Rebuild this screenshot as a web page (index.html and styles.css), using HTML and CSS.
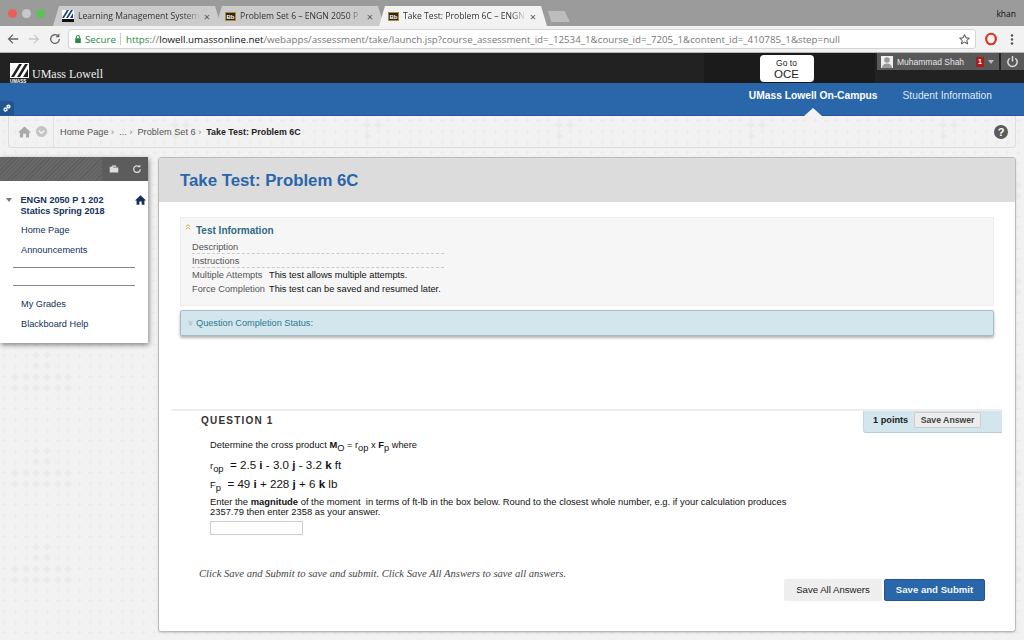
FILE: index.html
```html
<!DOCTYPE html>
<html lang="en">
  <head>
    <meta charset="UTF-8">
    <meta name="viewport" content="width=device-width, initial-scale=1.0">
    <title>Take Test: Problem 6C</title>
    <link rel="stylesheet" href="styles.css">
  </head>
  <body>
    <!-- browser chrome -->
    <div class="tabstrip">
      <div class="traffic">
        <span class="dot dot-red"></span>
        <span class="dot dot-grey"></span>
        <span class="dot dot-green"></span>
      </div>
      <div class="tab">
        <svg class="favicon" viewBox="0 0 12 12"><rect width="12" height="9" fill="#fff"/><path d="M0 8 5 0h2L2 8zM4 8l5-8h2L6 8zM8 8l3-5v5z" fill="#1c3f78"/><rect y="9" width="12" height="3" fill="#111"/></svg>
        <span class="tab-title">Learning Management System</span><span class="tab-x">×</span>
      </div>
      <div class="tab">
        <span class="favicon-sq">Bb</span>
        <span class="tab-title">Problem Set 6 – ENGN 2050 P</span><span class="tab-x">×</span>
      </div>
      <div class="tab tab-active">
        <span class="favicon-sq">Bb</span>
        <span class="tab-title">Take Test: Problem 6C – ENGN</span><span class="tab-x">×</span>
      </div>
      <div class="tab-new"></div>
      <div class="os-user">khan</div>
    </div>

    <div class="toolbar">
      <svg class="nav-icon" viewBox="0 0 16 16"><path d="M14 8H3M8 3 3 8l5 5" fill="none" stroke="#666" stroke-width="1.500"/></svg>
      <svg class="nav-icon" viewBox="0 0 16 16"><path d="M2 8h11M8 3l5 5-5 5" fill="none" stroke="#c8c8c8" stroke-width="1.500"/></svg>
      <svg class="nav-icon" viewBox="0 0 16 16"><path d="M13 8a5 5 0 1 1-1.500-3.500" fill="none" stroke="#666" stroke-width="1.500"/><path d="M13 1.500v4.500H8.500z" fill="#666"/></svg>
      <div class="omnibox">
        <svg class="lock" viewBox="0 0 10 12"><path d="M3 5V3.500a2 2 0 0 1 4 0V5" fill="none" stroke="#2a8a45" stroke-width="1.300"/><rect x="1.500" y="5" width="7" height="6" fill="#2a8a45"/></svg>
        <span class="secure">Secure</span>
        <span class="omni-sep"></span>
        <span class="url"><span class="url-https">https:</span>//<span class="url-host">lowell.umassonline.net</span>/webapps/assessment/take/launch.jsp?course_assessment_id=_12534_1&amp;course_id=_7205_1&amp;content_id=_410785_1&amp;step=null</span>
        <svg class="star" viewBox="0 0 16 16"><path d="m8 2 1.800 4 4.200.4-3.200 2.800 1 4.200L8 11.200 4.200 13.400l1-4.200L2 6.400 6.200 6z" fill="none" stroke="#444" stroke-width="1.200"/></svg>
      </div>
      <svg class="opera" viewBox="0 0 16 16"><ellipse cx="8" cy="8" rx="5.500" ry="6" fill="none" stroke="#e0301e" stroke-width="2.500"/></svg>
      <svg class="kebab" viewBox="0 0 4 16"><circle cx="2" cy="3" r="1.500" fill="#555"/><circle cx="2" cy="8" r="1.500" fill="#555"/><circle cx="2" cy="13" r="1.500" fill="#555"/></svg>
    </div>

    <!-- blackboard header -->
    <header class="topbar">
      <div class="brand">
        <svg class="brand-mark" viewBox="0 0 19 20"><rect width="19" height="15" fill="#fff"/><path d="M1 14 9 1h3L4 14zM7 14l8-13h3L10 14zM13 14l5-8v8z" fill="#222"/><text x="0" y="19.500" class="brand-mark-text">UMASS</text></svg>
        <span class="brand-name">UMass Lowell</span>
      </div>
      <div class="oce-wrap">
        <a class="oce-btn"><span class="oce-small">Go to</span><span class="oce-big">OCE</span></a>
      </div>
      <div class="user-box">
        <span class="avatar"><svg viewBox="0 0 12 12"><circle cx="6" cy="4" r="2.800" fill="#999"/><path d="M1 12c0-3 2-4.500 5-4.500s5 1.500 5 4.500z" fill="#999"/></svg></span>
        <span class="user-name">Muhammad Shah</span>
        <span class="user-badge">1</span>
        <span class="user-caret"></span>
      </div>
      <div class="power-box">
        <svg viewBox="0 0 14 14"><path d="M4 3.500a5 5 0 1 0 6 0" fill="none" stroke="#ddd" stroke-width="1.600"/><path d="M7 1v6" stroke="#ddd" stroke-width="1.600"/></svg>
      </div>
    </header>

    <nav class="bluebar">
      <span class="link-tab"><svg viewBox="0 0 10 10"><path d="M4 6 6.500 3.500M3.500 4.500 2.500 5.500a1.400 1.400 0 0 0 2 2l1-1M6.500 5.500l1-1a1.400 1.400 0 0 0-2-2l-1 1" fill="none" stroke="#fff" stroke-width="1.300"/></svg></span>
      <a class="bluebar-link bluebar-current">UMass Lowell On-Campus</a>
      <a class="bluebar-link">Student Information</a>
    </nav>

    <div class="page">
      <div class="crumbs">
        <svg class="crumb-home" viewBox="0 0 14 12"><path d="M7 0 0 6.500h2V12h3.500V8h3v4H12V6.500h2z" fill="#aaa"/></svg>
        <span class="crumb-menu"><svg viewBox="0 0 10 10"><path d="m2.500 4 2.500 2.500L7.500 4" fill="none" stroke="#f2f2f2" stroke-width="1.300"/></svg></span>
        <span class="crumb-list">
          <a>Home Page</a><span class="crumb-sep">›</span>
          <a>...</a><span class="crumb-sep">›</span>
          <a>Problem Set 6</a><span class="crumb-sep">›</span>
          <b>Take Test: Problem 6C</b>
        </span>
        <span class="help">?</span>
      </div>

      <div class="body-row">
        <aside class="sidebar">
          <div class="side-head">
            <span class="side-tools">
              <svg viewBox="0 0 14 12"><path d="M1 3h4l1 1h7v7H1z" fill="#ddd"/><path d="M4 1h6v2H4z" fill="#ddd"/></svg>
              <svg viewBox="0 0 12 12"><path d="M10 6.500a4 4 0 1 1-1.500-3.500" fill="none" stroke="#ddd" stroke-width="1.500"/><path d="M10 .5V4H6.500z" fill="#ddd"/></svg>
            </span>
          </div>
          <div class="side-body">
            <div class="course">
              <span class="course-caret"></span>
              <span class="course-name">ENGN 2050 P 1 202<br>Statics Spring 2018</span>
              <svg class="course-home" viewBox="0 0 14 12"><path d="M7 0 0 6.500h2V12h3.500V8h3v4H12V6.500h2z" fill="#12305c"/></svg>
            </div>
            <a class="side-link">Home Page</a>
            <a class="side-link">Announcements</a>
            <div class="side-gap"></div>
            <a class="side-link">My Grades</a>
            <a class="side-link">Blackboard Help</a>
          </div>
        </aside>

        <main class="panel">
          <h1 class="panel-title">Take Test: Problem 6C</h1>
          <div class="panel-inner">
            <section class="info">
              <h2 class="info-title">
                <svg class="info-chev" viewBox="0 0 8 8"><path d="M1 3.500 4 1l3 2.500M1 7 4 4.500 7 7" fill="none" stroke="#d9a74a" stroke-width="1.300"/></svg>
                Test Information
              </h2>
              <div class="info-table">
                <div class="info-row"><span class="info-key">Description</span></div>
                <div class="info-row"><span class="info-key">Instructions</span></div>
                <div class="info-row"><span class="info-key">Multiple Attempts</span><span class="info-val">This test allows multiple attempts.</span></div>
                <div class="info-row"><span class="info-key">Force Completion</span><span class="info-val">This test can be saved and resumed later.</span></div>
              </div>
            </section>
            <div class="status">
              <svg class="status-chev" viewBox="0 0 8 8"><path d="M1 1 4 3.500 7 1M1 4.500 4 7l3-2.500" fill="none" stroke="#999" stroke-width="1.200"/></svg>
              Question Completion Status:
            </div>
          </div>

          <section class="question">
            <div class="q-head">
              <h3 class="q-label">QUESTION 1</h3>
              <div class="q-points"><b>1 points</b><a class="q-save">Save Answer</a></div>
            </div>
            <div class="q-body">
              <p class="q-line">Determine the cross product <b>M</b><sub>O</sub> = r<sub>op</sub> x <b>F</b><sub>p</sub> where</p>
              <p class="q-eq"><span class="q-sym">r<sub>op</sub></span> &nbsp;= 2.5 <b>i</b> - 3.0 <b>j</b> - 3.2 <b>k</b> ft</p>
              <p class="q-eq"><span class="q-sym">F<sub>p</sub></span> &nbsp;= 49 <b>i</b> + 228 <b>j</b> + 6 <b>k</b> lb</p>
              <p class="q-text">Enter the <b>magnitude</b> of the moment &nbsp;in terms of ft-lb in the box below. Round to the closest whole number, e.g. if your calculation produces 2357.79 then enter 2358 as your answer.</p>
              <input class="q-input" type="text">
            </div>
          </section>

          <p class="hint">Click Save and Submit to save and submit. Click Save All Answers to save all answers.</p>
          <div class="actions">
            <a class="btn btn-light">Save All Answers</a>
            <a class="btn btn-blue">Save and Submit</a>
          </div>
        </main>
      </div>
    </div>
  </body>
</html>
```

FILE: styles.css
```css
* {
  box-sizing: border-box;
}

html,
body {
  height: 100%;
}

body {
  margin: 0;
  overflow: hidden;
  font-family: "Liberation Sans", Arial, sans-serif;
  font-size: 9px;
  color: #222;
  background: #f2f2f2;
}

h1,
h2,
h3,
p {
  margin: 0;
}

/* browser chrome */
.tabstrip {
  display: flex;
  align-items: flex-end;
  height: 26px;
  padding-left: 53px;
  background: #9b9b9b;
  position: relative;
}

.traffic {
  position: absolute;
  left: 8px;
  top: 9px;
  display: flex;
  gap: 5px;
}

.dot {
  width: 9px;
  height: 9px;
  border-radius: 50%;
}

.dot-red {
  background: #e9605a;
}

.dot-grey {
  background: #c9c9c9;
}

.dot-green {
  background: #5cc253;
}

.tab {
  display: flex;
  align-items: center;
  gap: 4px;
  flex: none;
  width: 168px;
  height: 20px;
  padding: 0 11px 0 9px;
  margin-right: -5px;
  font-family: "Open Sans", sans-serif;
  font-size: 8.600px;
  background: #cbcbcb;
  clip-path: polygon(0 100%, 6px 0, calc(100% - 6px) 0, 100% 100%);
  color: #333;
}

.tab-active {
  background: #f2f2f2;
  position: relative;
}

.tab-title {
  flex: 1;
  overflow: hidden;
  white-space: nowrap;
  -webkit-mask-image: linear-gradient(90deg, #000 88%, transparent);
  mask-image: linear-gradient(90deg, #000 88%, transparent);
}

.tab-x {
  font-size: 11px;
  color: #555;
}

.favicon {
  width: 12px;
  height: 12px;
  flex: none;
}

.favicon-sq {
  width: 11px;
  height: 9px;
  flex: none;
  font-family: "Liberation Sans", sans-serif;
  font-size: 6px;
  font-weight: bold;
  line-height: 8px;
  text-align: center;
  color: #fff;
  background: #2a2618;
  border: 1px solid #b08a2a;
}

.tab-new {
  width: 22px;
  height: 11px;
  margin: 0 0 4px 6px;
  background: #bdbdbd;
  clip-path: polygon(0 0, 75% 0, 100% 100%, 15% 100%);
}

.os-user {
  position: absolute;
  right: 8px;
  top: 8px;
  font-family: "Open Sans", sans-serif;
  font-size: 8.500px;
  color: #111;
}

.toolbar {
  display: flex;
  align-items: center;
  height: 27px;
  padding: 0 7px 0 4px;
  background: #f2f2f2;
  border-bottom: 1px solid #b5b5b5;
}

.nav-icon {
  width: 14px;
  height: 14px;
  margin: 0 5px 0 2px;
}

.omnibox {
  flex: 1;
  display: flex;
  align-items: center;
  height: 20px;
  margin: 0 8px 0 1px;
  padding: 0 4px 0 5px;
  background: #fff;
  border: 1px solid #d4d4d4;
  border-radius: 3px;
  font-family: "Open Sans", sans-serif;
  font-size: 9.750px;
  white-space: nowrap;
}

.lock {
  width: 8px;
  height: 10px;
  margin-right: 3px;
}

.secure {
  color: #2a8a45;
}

.omni-sep {
  width: 1px;
  height: 12px;
  margin: 0 5px 0 4px;
  background: #ccc;
}

.url {
  flex: 1;
  color: #777;
  overflow: hidden;
}

.url-https {
  color: #2a8a45;
}

.url-host {
  color: #111;
}

.star {
  width: 13px;
  height: 13px;
}

.opera {
  width: 14px;
  height: 14px;
  margin-right: 12px;
}

.kebab {
  width: 4px;
  height: 13px;
  margin-right: 3px;
}

/* blackboard header */
.topbar {
  display: flex;
  height: 30px;
  background: #222;
  position: relative;
}

.brand {
  flex: none;
  display: flex;
  align-items: flex-start;
  width: 704px;
  padding: 10px 0 0 10px;
  color: #eee;
}

.brand-mark {
  width: 19px;
  height: 20px;
  margin-right: 3px;
  overflow: visible;
  position: relative;
  z-index: 2;
}

.brand-mark-text {
  font-family: "Liberation Sans", sans-serif;
  font-size: 4.500px;
  font-weight: bold;
  fill: #fff;
}

.brand-name {
  font-family: "Liberation Serif", serif;
  font-size: 12px;
  margin-top: 4px;
}

.oce-wrap {
  flex: none;
  display: flex;
  justify-content: center;
  width: 171px;
  height: 32px;
  padding: 2px 6px 0 0;
  background: #1b1b1b;
  position: relative;
}

.oce-btn {
  display: flex;
  flex-direction: column;
  align-items: center;
  width: 54px;
  height: 27px;
  padding-top: 3px;
  background: #fff;
  border-radius: 4px;
  color: #222;
}

.oce-small {
  font-size: 8.500px;
  line-height: 10px;
}

.oce-big {
  font-size: 11.500px;
  line-height: 12px;
}

.user-box {
  flex: none;
  display: flex;
  align-items: center;
  width: 122px;
  height: 17px;
  margin-left: 2px;
  padding-left: 4px;
  background: #595959;
  color: #e5e5e5;
  font-size: 8.500px;
}

.avatar {
  width: 12px;
  height: 12px;
  margin-right: 4px;
  background: #eee;
}

.avatar svg {
  display: block;
}

.user-name {
  width: 79px;
}

.user-badge {
  width: 8px;
  height: 10px;
  margin-right: 4px;
  font-size: 7px;
  font-weight: bold;
  line-height: 10px;
  text-align: center;
  color: #fff;
  background: #a81e1e;
}

.user-caret {
  width: 0;
  height: 0;
  border: 3px solid transparent;
  border-top: 4px solid #bbb;
  border-bottom: 0;
}

.power-box {
  flex: none;
  width: 23px;
  height: 17px;
  margin-left: 2px;
  padding: 2px 5px;
  background: #595959;
}

.power-box svg {
  display: block;
  width: 13px;
  height: 13px;
}

.bluebar {
  display: flex;
  align-items: flex-start;
  justify-content: flex-end;
  gap: 25px;
  height: 33px;
  padding: 7px 32px 0 0;
  background: #2a66aa;
  border-bottom: 1px solid #1f5a9c;
  position: relative;
}

.bluebar-link {
  font-size: 10.250px;
  color: #dfe8f3;
}

.bluebar-current {
  font-weight: bold;
  color: #fff;
}

.bluebar-current::after {
  content: "";
  position: absolute;
  right: 202px;
  bottom: -1px;
  border: 9px solid transparent;
  border-top: 0;
  border-bottom: 8px solid #f3f3f3;
}

.link-tab {
  position: absolute;
  left: 0;
  bottom: 0;
  width: 14px;
  height: 14px;
  padding: 2px;
  background: #21558f;
  border-radius: 0 3px 0 0;
}

.link-tab svg {
  display: block;
}

/* page below the header: plus pattern with a few diamond patches */
.page {
  height: 524px;
  padding-bottom: 8px;
  background-color: #f2f2f2;
  background-image:
    url("data:image/svg+xml,%3Csvg xmlns='http://www.w3.org/2000/svg' width='192' height='96'%3E%3Cg fill='%23ebebeb'%3E%3Cpath d='M36 43l4 4-4 4-4-4zM47 43l4 4-4 4-4-4zM36 54l4 4-4 4-4-4zM47 54l4 4-4 4-4-4zM15 65l4 4-4 4-4-4zM26 65l4 4-4 4-4-4zM36 65l4 4-4 4-4-4zM47 65l4 4-4 4-4-4zM58 65l4 4-4 4-4-4zM68 65l4 4-4 4-4-4zM15 76l4 4-4 4-4-4zM26 76l4 4-4 4-4-4zM36 76l4 4-4 4-4-4zM47 76l4 4-4 4-4-4zM58 76l4 4-4 4-4-4zM68 76l4 4-4 4-4-4zM175 5l4 4-4 4-4-4zM186 5l4 4-4 4-4-4zM175 16l4 4-4 4-4-4z'/%3E%3C/g%3E%3C/svg%3E"),
    url("data:image/svg+xml,%3Csvg xmlns='http://www.w3.org/2000/svg' width='32' height='32'%3E%3Cg fill='%23ebebeb'%3E%3Cpath d='M2 4h5v1H2zM4 2h1v5H4zM13 4h5v1h-5zM15 2h1v5h-1zM24 4h5v1h-5zM26 2h1v5h-1zM2 15h5v1H2zM4 13h1v5H4zM13 15h5v1h-5zM15 13h1v5h-1zM24 15h5v1h-5zM26 13h1v5h-1zM2 26h5v1H2zM4 24h1v5H4zM13 26h5v1h-5zM15 24h1v5h-1zM24 26h5v1h-5zM26 24h1v5h-1z'/%3E%3C/g%3E%3C/svg%3E");
}

.crumbs {
  display: flex;
  align-items: center;
  height: 32px;
  margin: 0 8px;
  padding: 0 7px 0 9px;
  border: 1px solid #ddd;
  border-top: 0;
  border-radius: 0 0 4px 4px;
  font-size: 9.200px;
  color: #555;
}

.crumb-home {
  width: 13px;
  height: 12px;
  margin-right: 5px;
}

.crumb-menu {
  width: 11px;
  height: 11px;
  background: #c4c4c4;
  border-radius: 50%;
}

.crumb-menu svg {
  display: block;
}

.crumb-sep {
  margin: 0 2.500px;
  color: #888;
}

.crumb-list b {
  font-size: 8.900px;
  color: #222;
}

.crumb-list {
  flex: 1;
  align-self: stretch;
  margin-left: 6px;
  padding-left: 6px;
  line-height: 33px;
  border-left: 1px solid #e2e2e2;
}

.help {
  width: 14px;
  height: 14px;
  font-size: 11px;
  font-weight: bold;
  line-height: 14px;
  text-align: center;
  color: #fff;
  background: #5a5a5a;
  border-radius: 50%;
}

.body-row {
  display: flex;
  align-items: flex-start;
  gap: 10px;
  padding: 9px 8px 0 0;
}

.sidebar {
  flex: none;
  width: 148px;
  background: #fff;
  box-shadow: 1px 2px 5px rgba(0, 0, 0, 0.45);
}

.side-head {
  display: flex;
  justify-content: flex-end;
  height: 24px;
  background: repeating-linear-gradient(135deg, #5e5e5e 0 1px, #686868 1px 3px);
}

.side-tools {
  display: flex;
  align-items: center;
  gap: 13px;
  width: 46px;
  padding-left: 7px;
  background: #5c5c5c;
}

.side-tools svg {
  width: 10px;
  height: 10px;
}

.side-body {
  height: 162px;
  padding-top: 14px;
}

.course {
  display: flex;
  padding: 0 2px 0 6px;
  height: 26px;
  font-weight: bold;
  line-height: 11px;
  color: #12305c;
  font-size: 9.150px;
}

.course-caret {
  flex: none;
  width: 0;
  height: 0;
  margin: 3px 8.500px 0 0;
  border: 3.500px solid transparent;
  border-top: 4px solid #777;
  border-bottom: 0;
}

.course-name {
  flex: 1;
}

.course-home {
  width: 11px;
  height: 10px;
}

.side-link {
  display: block;
  height: 19.500px;
  padding-left: 21px;
  font-size: 9.200px;
  line-height: 19px;
  color: #12305c;
}

.side-gap {
  height: 19px;
  margin: 7px 13px 9px;
  border-top: 1px solid #888;
  border-bottom: 1px solid #888;
}

.panel {
  flex: 1;
  height: 475px;
  background: #fff;
  border: 1px solid #bbb;
  border-radius: 3px;
  box-shadow: 0 1px 2px rgba(0, 0, 0, 0.15);
}

.panel-title {
  height: 44px;
  padding: 12px 21px 0;
  font-size: 16.800px;
  line-height: 22px;
  color: #2a66aa;
  background: #dcdcdc;
}

.panel-inner {
  height: 207px;
  padding: 15px 21px 0;
}

.info {
  height: 89px;
  padding: 6px 11px 0 11px;
  background: #f6f6f6;
  border: 1px solid #eee;
}

.info-title {
  font-size: 10px;
  line-height: 13px;
  color: #2b6a82;
  position: relative;
  padding-left: 4px;
}

.info-chev {
  position: absolute;
  left: -7px;
  top: 0;
  width: 6px;
  height: 6px;
}

.info-table {
  width: 252px;
  margin-top: 3px;
}

.info-row {
  display: flex;
  height: 14px;
  line-height: 14px;
  border-bottom: 1px dashed #ccc;
  font-size: 9.250px;
  white-space: nowrap;
}

.info-row:nth-child(n+3) {
  border-bottom: 0;
}

.info-key {
  width: 77px;
  color: #555;
}

.info-val {
  color: #111;
}

.status {
  display: flex;
  align-items: center;
  gap: 3px;
  height: 26px;
  margin-top: 4px;
  padding-left: 7px;
  font-size: 9.200px;
  color: #2b7a92;
  background: #d3e6ed;
  border: 1px solid #a9bcc4;
  border-radius: 2px;
  box-shadow: 0 2px 3px rgba(0, 0, 0, 0.3);
}

.status-chev {
  width: 5px;
  height: 6px;
}

.question {
  margin-left: 12px;
  margin-right: 13px;
  border-top: 2px solid #eee;
  height: 150px;
}

.q-head {
  display: flex;
  justify-content: space-between;
  height: 22px;
  margin-bottom: 5px;
}

.q-label {
  padding: 3px 0 0 30px;
  font-size: 10px;
  line-height: 13px;
  letter-spacing: 1.200px;
  color: #333;
}

.q-points {
  display: flex;
  align-items: center;
  width: 139px;
  padding: 0 0 3px 9px;
  font-size: 9.200px;
  background: #d3e6ed;
  border-left: 1px solid #c5d6dc;
  border-bottom: 1px solid #bccbd1;
  border-radius: 0 0 0 3px;
}

.q-save {
  margin-left: 6px;
  padding: 0 5.500px;
  height: 16px;
  font-size: 8.700px;
  font-weight: bold;
  line-height: 15px;
  color: #444;
  background: #ececec;
  border: 1px solid #ccc;
  border-radius: 2px;
}

.q-body {
  padding-left: 39px;
  width: 625px;
  font-size: 9.400px;
  line-height: 10px;
  color: #111;
}

sub {
  font-size: 100%;
  line-height: 0;
}

.q-line {
  height: 16px;
  padding-top: 2px;
  margin-bottom: 4px;
  font-size: 9.300px;
}

.q-eq {
  height: 19px;
  font-size: 11.600px;
  line-height: 14px;
}

.q-sym {
  font-size: 9.400px;
}

.q-text {
  margin-top: 1px;
  height: 20px;
}

.q-input {
  display: block;
  width: 93px;
  height: 14px;
  margin-top: 4px;
  padding: 0;
  background: #fff;
  border: 1px solid #ccc;
}

.hint {
  margin: 9px 0 0 40px;
  font-family: "Liberation Serif", serif;
  font-style: italic;
  font-size: 10.600px;
  line-height: 12px;
  color: #444;
}

.actions {
  display: flex;
  justify-content: flex-end;
  gap: 2px;
  margin-top: -1px;
  padding-right: 30px;
}

.btn {
  height: 22px;
  font-size: 9.600px;
  line-height: 22px;
  text-align: center;
  border-radius: 2px;
}

.btn-light {
  width: 98px;
  color: #222;
  background: #eee;
}

.btn-blue {
  width: 101px;
  font-weight: bold;
  color: #f2f6fb;
  background: #2a66aa;
  border: 1px solid #21558f;
  line-height: 20px;
}
```
